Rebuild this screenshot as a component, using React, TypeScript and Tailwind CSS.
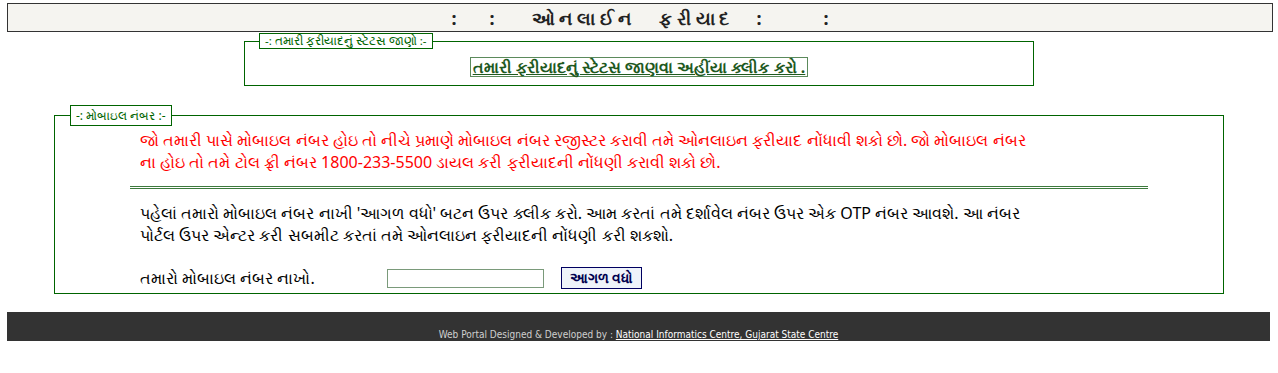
export default function App() {
  return (
    <div className="min-h-[373px] bg-white font-['Noto_Sans',sans-serif] text-black">
      <div className="pt-[3px] px-[7px] pr-[5px]">
        <div className="h-[29px] border border-[#333] bg-[#f5f4f0] flex items-center justify-center text-[18px] font-bold leading-none text-[#222]">
          <span>:</span>
          <span className="ml-[33px]">:</span>
          <span className="ml-[37px] whitespace-pre">ઓ ન લા ઈ ન</span>
          <span className="ml-[28px] whitespace-pre">ફ રી યા દ</span>
          <span className="ml-[27px]">:</span>
          <span className="ml-[62px]">:</span>
        </div>
      </div>

      <fieldset className="mx-auto mt-[1px] w-[790px] border border-[#006400] h-[53px] px-0">
        <legend className="ml-[14px] border border-[#006400] bg-white px-[5px] text-[11.5px] leading-[14px] text-[#006400]">
          -: તમારી ફરીયાદનું સ્ટેટસ જાણો :-
        </legend>
        <div className="flex justify-center pt-[8px]">
          <a className="border border-[#5b8a5b] px-[2px] text-[16px] font-bold leading-[18px] text-[#1f5a1f] underline">
            તમારી ફરીયાદનું સ્ટેટસ જાણવા અહીંયા ક્લીક કરો .
          </a>
        </div>
      </fieldset>

      <fieldset className="mx-auto mt-[19px] w-[1170px] border border-[#006400] h-[189px]">
        <legend className="ml-[15px] border border-[#006400] bg-white px-[5px] text-[12px] leading-[19px] text-[#006400]">
          -: મોબાઇલ નંબર :-
        </legend>
        <div className="mx-auto w-[1018px]">
          <p className="pl-[10px] pt-[3px] text-[16px] leading-[22px] text-[#ff0000] whitespace-nowrap">
            જો તમારી પાસે મોબાઇલ નંબર હોઇ તો નીચે પ્રમાણે મોબાઇલ નંબર રજીસ્ટર કરાવી તમે ઓનલાઇન ફરીયાદ નોંધાવી શકો છો. જો મોબાઇલ નંબર
            <br />
            ના હોઇ તો તમે ટોલ ફ્રી નંબર 1800-233-5500 ડાયલ કરી ફરીયાદની નોંધણી કરાવી શકો છો.
          </p>
          <div className="mt-[13px] h-[3px] border-y border-[#3d7a3d]" />
          <p className="pl-[10px] pt-[13px] text-[16px] leading-[22px] whitespace-nowrap">
            પહેલાં તમારો મોબાઇલ નંબર નાખી 'આગળ વધો' બટન ઉપર ક્લીક કરો. આમ કરતાં તમે દર્શાવેલ નંબર ઉપર એક OTP નંબર આવશે. આ નંબર
            <br />
            પોર્ટલ ઉપર એન્ટર કરી સબમીટ કરતાં તમે ઓનલાઇન ફરીયાદની નોંધણી કરી શકશો.
          </p>
          <div className="mt-[21px] flex items-center pl-[10px]">
            <span className="w-[247px] text-[16px] leading-[22px]">તમારો મોબાઇલ નંબર નાખો.</span>
            <input className="h-[19px] w-[157px] border border-[#7a9a7a] bg-white" />
            <button className="ml-[17px] h-[22px] w-[81px] border border-[#000060] bg-[#eef3fa] text-[14px] font-bold leading-none text-[#000050]">
              આગળ વધો
            </button>
          </div>
        </div>
      </fieldset>

      <div className="mt-[18px] ml-[7px] mr-[8px] h-[29px] bg-[#333] flex items-end justify-center">
        <p className="text-[10px] leading-[13px] font-['DejaVu_Sans_Condensed','DejaVu_Sans',sans-serif] text-[#cfcfcf]">
          Web Portal Designed &amp; Developed by :{" "}
          <a className="text-white underline">National Informatics Centre, Gujarat State Centre</a>
        </p>
      </div>
    </div>
  );
}
